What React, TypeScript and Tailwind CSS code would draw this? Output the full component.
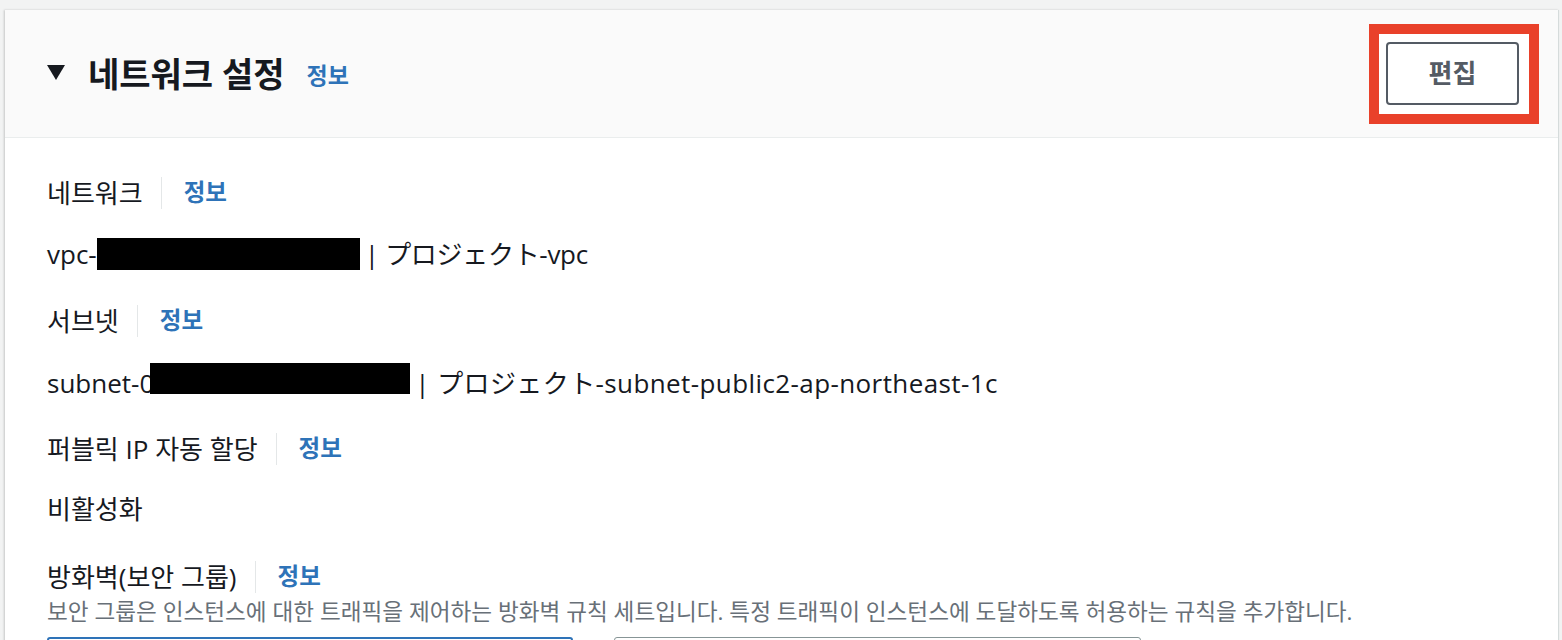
import React from "react";

const FONT = { fontFamily: '"Open Sans", "Noto Sans CJK KR", "Noto Sans CJK JP", sans-serif' };

function LabelRow({ label, mt }: { label: string; mt: string }) {
  return (
    <div className={`flex items-center h-[32px] ${mt}`}>
      <span className="text-[26px] text-[#16191f] leading-none">{label}</span>
      <span className="ml-[18px] w-px h-[32px] bg-[#e4e7e8]" />
      <span className="ml-[22px] text-[23.5px] font-bold text-[#2e73b8] leading-none">정보</span>
    </div>
  );
}

export default function App() {
  return (
    <div className="h-[640px] overflow-hidden bg-[#f2f3f3] pt-[10px] pl-[5px]" style={FONT}>
      <div className="w-[1554px] h-[700px] bg-white border-r border-[#d5dbdb] shadow-[-1px_0_2px_rgba(0,0,0,0.18)]">
        <div className="h-[128px] bg-[#fafafa] border-b border-[#eaeded] flex items-center pl-[42px] pr-[19px]">
          <svg width="18" height="15" viewBox="0 0 18 15" className="mt-[-2px]">
            <polygon points="0,0 18,0 9,15" fill="#16191f" />
          </svg>
          <span className="ml-[23px] text-[34px] font-bold text-[#16191f] leading-none">네트워크 설정</span>
          <span className="ml-[22px] mt-[4px] text-[23px] font-bold text-[#2e73b8] leading-none">정보</span>
          <div className="ml-auto border-[10px] border-[#e9412a] bg-white pt-[8px] pb-[9px] pl-[7px] pr-[10px]">
            <div className="w-[133px] h-[63px] border-2 border-[#545b64] rounded-[4px] flex items-center justify-center">
              <span className="text-[26px] font-bold text-[#545b64] leading-none">편집</span>
            </div>
          </div>
        </div>

        <div className="pl-[42px] pt-[39px]">
          <LabelRow label="네트워크" mt="mt-0" />
          <div className="flex items-center h-[32px] mt-[29px] text-[26px] text-[#16191f] leading-none">
            <span>vpc-</span>
            <span className="w-[263px] h-[32px] bg-black" />
            <span className="ml-[5px] tracking-[-0.3px]">| プロジェクト-vpc</span>
          </div>

          <LabelRow label="서브넷" mt="mt-[35px]" />
          <div className="flex items-center h-[32px] mt-[30px] text-[26px] text-[#16191f] leading-none">
            <span>subnet-0</span>
            <span className="w-[260px] h-[31px] bg-black mb-[10px] ml-[-4px]" />
            <span className="ml-[5px] tracking-[0.4px]">| プロジェクト-subnet-public2-ap-northeast-1c</span>
          </div>

          <LabelRow label="퍼블릭 IP 자동 할당" mt="mt-[34px]" />
          <div className="flex items-center h-[32px] mt-[28px] text-[26px] text-[#16191f] leading-none">
            <span>비활성화</span>
          </div>

          <LabelRow label="방화벽(보안 그룹)" mt="mt-[36px]" />
          <div className="mt-[6px] h-[26px] flex items-center text-[22.6px] text-[#687078] leading-none whitespace-nowrap">
            보안 그룹은 인스턴스에 대한 트래픽을 제어하는 방화벽 규칙 세트입니다. 특정 트래픽이 인스턴스에 도달하도록 허용하는 규칙을 추가합니다.
          </div>

          <div className="mt-[12px] flex gap-[41px]">
            <div className="w-[526px] h-[80px] border-2 border-[#2e73b8] rounded-[3px]" />
            <div className="w-[527px] h-[80px] border border-[#879596] rounded-[3px]" />
          </div>
        </div>
      </div>
    </div>
  );
}
